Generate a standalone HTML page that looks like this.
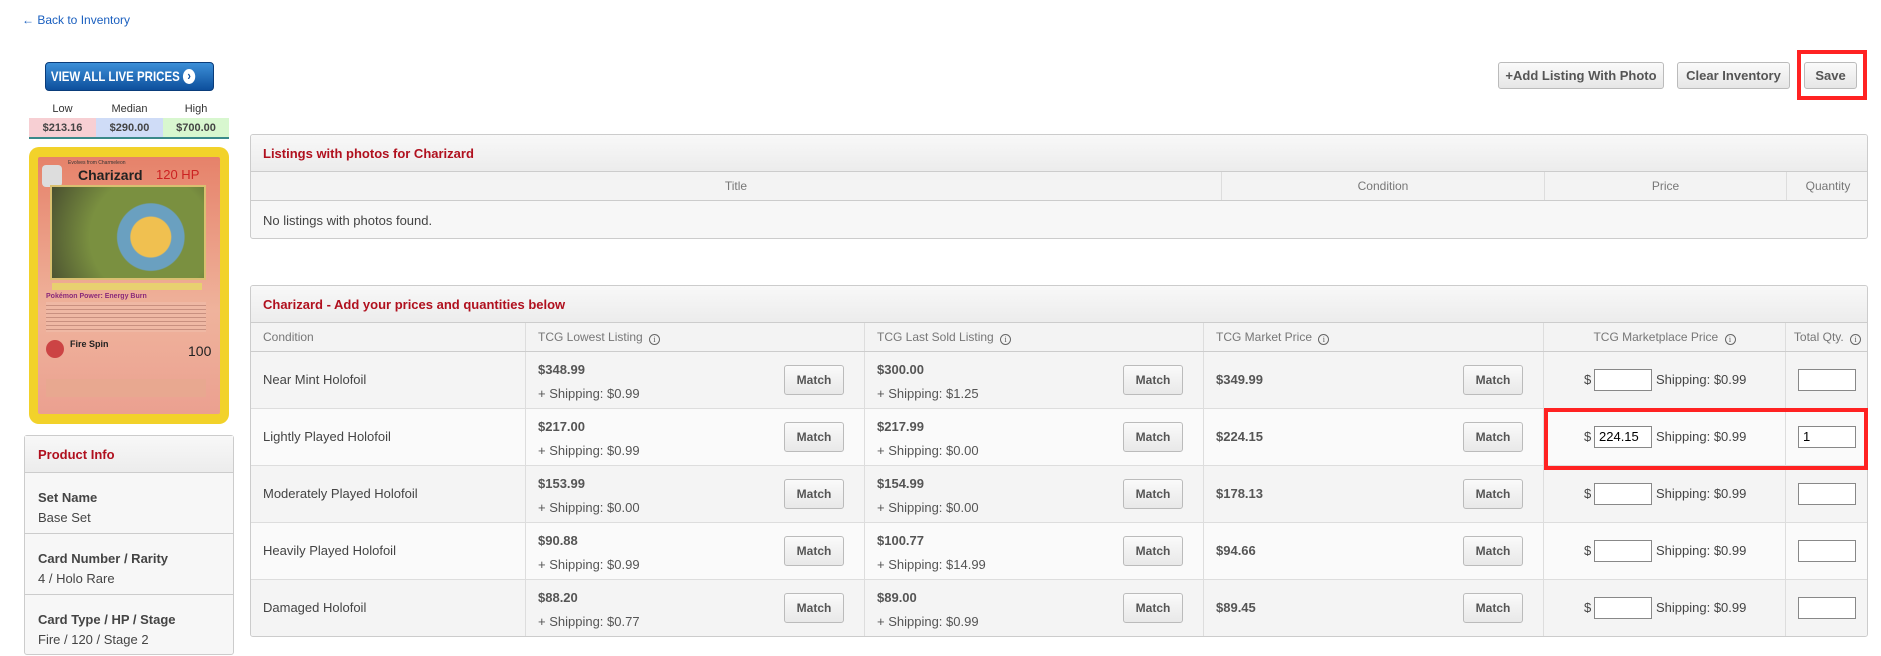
<!DOCTYPE html>
<html><head><meta charset="utf-8"><style>
*{box-sizing:border-box;margin:0;padding:0}
body{width:1881px;height:647px;overflow:hidden;background:#fff;font-family:"Liberation Sans",Arial,sans-serif;color:#444;font-size:13px;position:relative}
.a{position:absolute}
.btn{position:absolute;border:1px solid #bbb;border-radius:3px;background:linear-gradient(#fafafa,#e6e6e6);font-weight:bold;color:#555;font-size:13px;text-align:center}
.panel{position:absolute;left:250px;width:1618px;border:1px solid #ccc;border-radius:3px;background:#f7f7f7;overflow:hidden}
.ph{height:37px;background:linear-gradient(#f8f8f8,#ececec);border-bottom:1px solid #ccc;color:#b0101e;font-weight:bold;font-size:13px;padding:0 12px;line-height:37px}
.cell{position:absolute;top:0;bottom:0;border-left:1px solid #ddd}
.hdr{position:absolute;left:0;right:0;height:29px;border-bottom:1px solid #ccc;background:#f3f3f3;color:#777;font-size:12px;line-height:29px}
.row{position:absolute;left:0;right:0;height:57px;border-bottom:1px solid #ddd}
.m{position:absolute;width:60px;height:30px;top:13px;border:1px solid #bbb;border-radius:3px;background:linear-gradient(#fafafa,#e8e8e8);font-weight:bold;color:#555;font-size:12px;line-height:28px;text-align:center}
.p1{position:absolute;top:10px;font-weight:bold;color:#555}
.p2{position:absolute;top:34px;color:#555}
.inp{position:absolute;height:22px;border:1px solid #888;background:#fff;font-size:13px;color:#000;padding-left:4px;line-height:20px}
.i{display:inline-block;width:11px;height:11px;border:1px solid #666;border-radius:50%;font-size:8px;line-height:10px;text-align:center;color:#555;vertical-align:-1px;margin-left:3px;font-family:"Liberation Serif",serif}
</style></head><body>
<div class="a" style="left:22px;top:13px;color:#1a5fbf;font-size:12px">← Back to Inventory</div>
<div class="a" style="left:45px;top:62px;width:169px;height:29px;border-radius:4px;background:linear-gradient(#3c8fd8,#0d4f9c);border:1px solid #0a3c7a;overflow:hidden"><div style="white-space:nowrap;color:#fff;font-weight:bold;font-size:14px;line-height:27px;padding-left:6px;transform:scaleX(0.82);transform-origin:0 50%;width:200px">VIEW ALL LIVE PRICES <span style="display:inline-block;width:15px;height:15px;border-radius:50%;background:#fff;color:#0d4f9c;font-size:13px;line-height:14px;text-align:center;vertical-align:1px">›</span></div></div>
<div class="a" style="left:29px;top:103px;width:200px;font-size:11px;color:#333;display:flex;line-height:12px"><span style="width:67px;text-align:center">Low</span><span style="width:67px;text-align:center">Median</span><span style="width:66px;text-align:center">High</span></div>
<div class="a" style="left:29px;top:118px;width:200px;height:21px;display:flex;font-size:11px;font-weight:bold;color:#444;line-height:20px;border-bottom:2px solid #3a8a8a"><span style="width:67px;text-align:center;background:#f7cfd3">$213.16</span><span style="width:67px;text-align:center;background:#cfdcf7">$290.00</span><span style="width:66px;text-align:center;background:#d8f7cf">$700.00</span></div>
<!-- card -->
<div class="a" style="left:29px;top:147px;width:200px;height:277px;border-radius:10px;background:#f2d22a;padding:10px 9px">
 <div style="position:relative;width:100%;height:100%;background:linear-gradient(#e6826a,#efb39c 60%,#eba090);border-radius:2px">
  <div class="a" style="left:30px;top:3px;font-size:5px;color:#333">Evolves from Charmeleon</div>
  <div class="a" style="left:40px;top:10px;font-size:14px;font-weight:bold;color:#222">Charizard</div>
  <div class="a" style="left:118px;top:10px;font-size:13px;color:#c22">120 HP</div>
  <div class="a" style="left:4px;top:8px;width:20px;height:22px;background:#ddd;border-radius:4px"></div>
  <div class="a" style="left:12px;top:28px;width:156px;height:95px;border:2px solid #d9c070;background:radial-gradient(circle at 65% 55%,#f0c050 0 18%,#6aa0c0 19% 30%,#7a9040 31% 55%,#4a5030)"></div>
  <div class="a" style="left:14px;top:126px;width:150px;height:7px;background:#e8d070"></div>
  <div class="a" style="left:8px;top:136px;font-size:7px;font-weight:bold;color:#8a2a7a">Pokémon Power: Energy Burn</div>
  <div class="a" style="left:8px;top:145px;width:160px;height:30px;background:repeating-linear-gradient(#efb8a4 0 3px,#c99080 3px 4px)"></div>
  <div class="a" style="left:8px;top:183px;width:18px;height:18px;border-radius:50%;background:#c44"></div>
  <div class="a" style="left:32px;top:182px;font-size:9px;font-weight:bold;color:#222">Fire Spin</div>
  <div class="a" style="left:150px;top:186px;font-size:14px;color:#222">100</div>
  <div class="a" style="left:8px;top:222px;width:160px;height:18px;background:#e8a890"></div>
 </div>
</div>
<!-- product info -->
<div class="a" style="left:24px;top:435px;width:210px;height:220px;border:1px solid #ccc;border-radius:3px;background:#f7f7f7">
 <div style="height:37px;background:linear-gradient(#f8f8f8,#ececec);border-bottom:1px solid #ccc;color:#b0101e;font-weight:bold;line-height:37px;padding-left:13px">Product Info</div>
 <div style="height:61px;border-bottom:1px solid #ccc;padding:15px 13px 0;line-height:20px"><b>Set Name</b><br>Base Set</div>
 <div style="height:61px;border-bottom:1px solid #ccc;padding:15px 13px 0;line-height:20px"><b>Card Number / Rarity</b><br>4 / Holo Rare</div>
 <div style="height:61px;padding:15px 13px 0;line-height:20px"><b>Card Type / HP / Stage</b><br>Fire / 120 / Stage 2</div>
</div>
<!-- top buttons -->
<div class="btn" style="left:1498px;top:62px;width:166px;height:27px;line-height:25px">+Add Listing With Photo</div>
<div class="btn" style="left:1677px;top:62px;width:113px;height:27px;line-height:25px">Clear Inventory</div>
<div class="a" style="left:1797px;top:50px;width:70px;height:50px;border:4px solid #f22"></div>
<div class="btn" style="left:1804px;top:62px;width:53px;height:27px;line-height:25px">Save</div>
<!-- panel 1 -->
<div class="panel" style="top:134px;height:105px">
 <div class="ph">Listings with photos for Charizard</div>
 <div class="hdr" style="top:37px;background:#f3f3f3">
  <div class="cell" style="left:0;width:970px;border:0;text-align:center">Title</div>
  <div class="cell" style="left:970px;width:323px;text-align:center">Condition</div>
  <div class="cell" style="left:1293px;width:242px;text-align:center">Price</div>
  <div class="cell" style="left:1535px;width:83px;text-align:center">Quantity</div>
 </div>
 <div class="a" style="left:12px;top:78px;color:#444">No listings with photos found.</div>
</div>
<!-- panel 2 -->
<div class="panel" style="top:285px;height:352px">
 <div class="ph">Charizard - Add your prices and quantities below</div>
 <div class="hdr" style="top:37px">
  <div class="cell" style="left:0;border:0;padding-left:12px">Condition</div>
  <div class="cell" style="left:274px;width:339px;padding-left:12px">TCG Lowest Listing <span class="i">i</span></div>
  <div class="cell" style="left:613px;width:339px;padding-left:12px">TCG Last Sold Listing <span class="i">i</span></div>
  <div class="cell" style="left:952px;width:340px;padding-left:12px">TCG Market Price <span class="i">i</span></div>
  <div class="cell" style="left:1292px;width:242px;text-align:center">TCG Marketplace Price <span class="i">i</span></div>
  <div class="cell" style="left:1534px;width:84px;text-align:center">Total Qty. <span class="i">i</span></div>
 </div>
 <div id="rows"></div>
</div>
<div class="a" style="left:1544px;top:408px;width:324px;height:62px;border:4px solid #f22"></div>
<script>
var d=[["Near Mint Holofoil","$348.99","$0.99","$300.00","$1.25","$349.99","",""],
["Lightly Played Holofoil","$217.00","$0.99","$217.99","$0.00","$224.15","224.15","1"],
["Moderately Played Holofoil","$153.99","$0.00","$154.99","$0.00","$178.13","",""],
["Heavily Played Holofoil","$90.88","$0.99","$100.77","$14.99","$94.66","",""],
["Damaged Holofoil","$88.20","$0.77","$89.00","$0.99","$89.45","",""]];
var h="";
d.forEach(function(r,i){
h+='<div class="row" style="top:'+(66+i*57)+'px;background:'+(i%2?'#fafafa':'#f4f4f4')+'">'+
'<div class="a" style="left:12px;top:20px">'+r[0]+'</div>'+
'<div class="cell" style="left:274px;width:339px"><div class="p1" style="left:12px">'+r[1]+'</div><div class="p2" style="left:12px">+ Shipping: '+r[2]+'</div><div class="m" style="left:258px">Match</div></div>'+
'<div class="cell" style="left:613px;width:339px"><div class="p1" style="left:12px">'+r[3]+'</div><div class="p2" style="left:12px">+ Shipping: '+r[4]+'</div><div class="m" style="left:258px">Match</div></div>'+
'<div class="cell" style="left:952px;width:340px"><div class="p1" style="left:12px;top:20px">'+r[5]+'</div><div class="m" style="left:259px">Match</div></div>'+
'<div class="cell" style="left:1292px;width:242px"><div class="a" style="left:40px;top:20px">$</div><div class="inp" style="left:50px;top:17px;width:58px">'+r[6]+'</div><div class="a" style="left:112px;top:20px">Shipping: $0.99</div></div>'+
'<div class="cell" style="left:1534px;width:84px"><div class="inp" style="left:12px;top:17px;width:58px">'+r[7]+'</div></div>'+
'</div>';});
document.getElementById("rows").innerHTML=h;
</script>
</body></html>
